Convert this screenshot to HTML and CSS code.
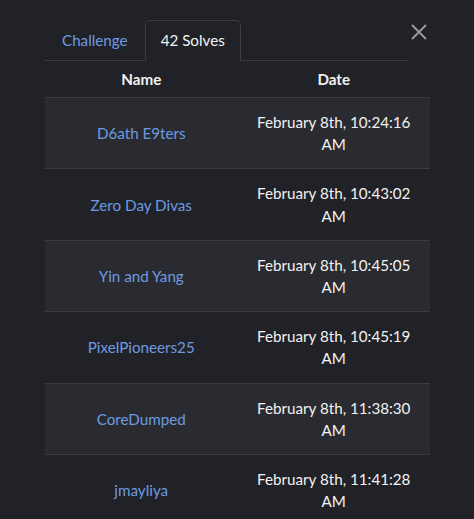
FILE: index.html
```html
<!DOCTYPE html>
<html lang="en">
<head>
    <meta charset="UTF-8">
    <meta name="viewport" content="width=device-width, initial-scale=1.0">
    <title>42 Solves</title>
    <link rel="stylesheet" href="styles.css">
</head>
<body>
    <div class="modal">
        <div class="modal-head">
            <ul class="tabs">
                <li class="tab"><a href="#">Challenge</a></li>
                <li class="tab active"><a href="#">42 Solves</a></li>
            </ul>
            <button class="close" aria-label="Close">
                <svg width="16" height="16" viewBox="0 0 16 16"><path d="M1 1L15 15M15 1L1 15" stroke="#9a9ca1" stroke-width="1.8" fill="none"/></svg>
            </button>
        </div>
        <table class="solves">
            <thead>
                <tr><th>Name</th><th>Date</th></tr>
            </thead>
            <tbody>
                <tr><td><a href="#">D6ath E9ters</a></td><td>February 8th, 10:24:16 AM</td></tr>
                <tr><td><a href="#">Zero Day Divas</a></td><td>February 8th, 10:43:02 AM</td></tr>
                <tr><td><a href="#">Yin and Yang</a></td><td>February 8th, 10:45:05 AM</td></tr>
                <tr><td><a href="#">PixelPioneers25</a></td><td>February 8th, 10:45:19 AM</td></tr>
                <tr><td><a href="#">CoreDumped</a></td><td>February 8th, 11:38:30 AM</td></tr>
                <tr><td><a href="#">jmayliya</a></td><td>February 8th, 11:41:28 AM</td></tr>
            </tbody>
        </table>
    </div>
</body>
</html>
```

FILE: styles.css
```css
body{margin:0;background:#212227;color:#f2f2f2;font-family:Lato,"Open Sans",sans-serif;font-size:15.2px}
.modal{width:385px;margin:0 0 0 45px;padding-top:20px}
.modal-head{display:flex}
.tabs{display:flex;flex:1;list-style:none;margin:0;padding:0;border-bottom:1px solid #3c3e44}
.tab{margin-bottom:-1px}
.tab a{display:block;padding:8px 16px;line-height:23px;color:#6d9ae0;text-decoration:none;border:1px solid transparent;border-radius:5px 5px 0 0}
.tab.active a{padding:8px 15px;color:#f2f2f2;background:#212227;border-color:#3c3e44 #3c3e44 #212227}
.close{width:22px;padding:0 0 0 3px;margin-top:4px;align-self:flex-start;background:none;border:none;cursor:pointer}
.close svg{display:block}
.solves{width:100%;border-collapse:collapse;table-layout:fixed;text-align:center}
.solves th{padding:7px 12px 7px;line-height:22px;font-weight:bold}
.solves td{padding:13px 12px;line-height:22.2px;border-top:1px solid #3a3c42;vertical-align:middle}
.solves tbody tr:nth-child(odd){background:#2a2b30}
.solves td a{color:#6d9ae0;text-decoration:none}
```
